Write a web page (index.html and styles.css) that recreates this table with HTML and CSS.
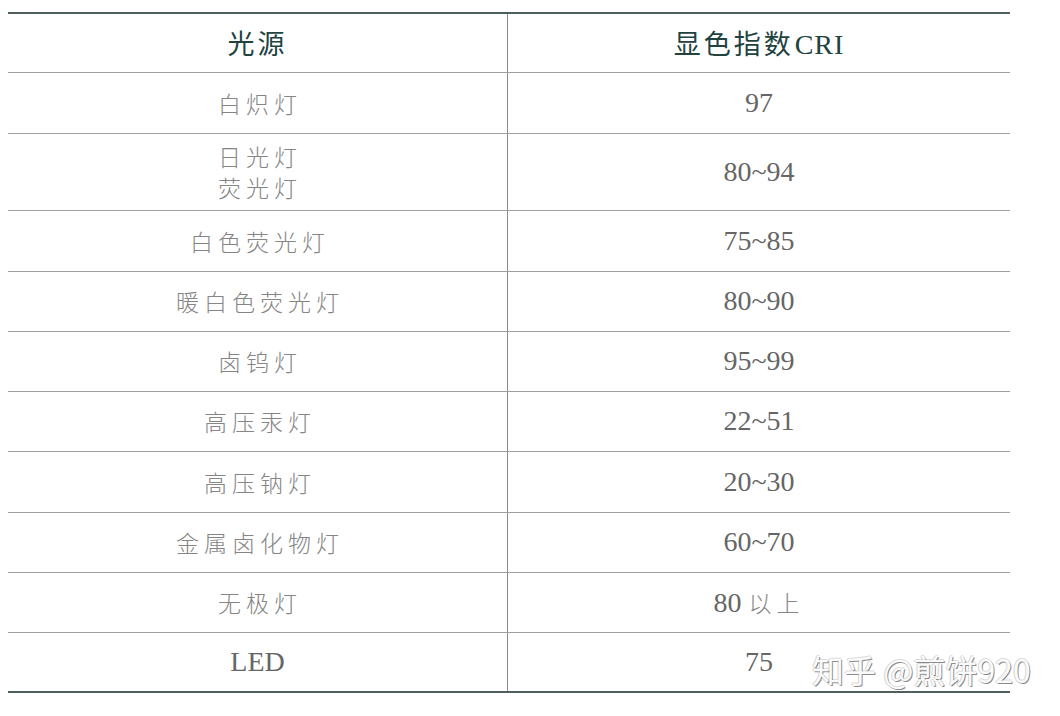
FILE: index.html
```html
<!DOCTYPE html>
<html lang="zh-CN">
<head>
<meta charset="utf-8">
<title>光源 显色指数</title>
<link rel="stylesheet" href="styles.css">
</head>
<body>
<div class="page">
  <table class="cri">
    <thead>
      <tr class="head"><th>光源</th><th>显色指数<span class="lat">CRI</span></th></tr>
    </thead>
    <tbody>
      <tr class="r61"><td class="zh"><span>白炽灯</span></td><td class="num">97</td></tr>
      <tr class="r77"><td class="zh"><span class="ln">日光灯</span><span class="ln">荧光灯</span></td><td class="num">80~94</td></tr>
      <tr class="r61"><td class="zh"><span>白色荧光灯</span></td><td class="num">75~85</td></tr>
      <tr class="r60"><td class="zh"><span>暖白色荧光灯</span></td><td class="num">80~90</td></tr>
      <tr class="r60"><td class="zh"><span>卤钨灯</span></td><td class="num">95~99</td></tr>
      <tr class="r60"><td class="zh"><span>高压汞灯</span></td><td class="num">22~51</td></tr>
      <tr class="r61"><td class="zh"><span>高压钠灯</span></td><td class="num">20~30</td></tr>
      <tr class="r60"><td class="zh"><span>金属卤化物灯</span></td><td class="num">60~70</td></tr>
      <tr class="r60"><td class="zh"><span>无极灯</span></td><td class="num">80 <span class="zhn">以上</span></td></tr>
      <tr class="r60"><td class="num">LED</td><td class="num">75</td></tr>
    </tbody>
  </table>
  <div class="mark">知乎 @煎饼920</div>
</div>
</body>
</html>
```
FILE: styles.css
```css
html, body {
  margin: 0;
  padding: 0;
  background: #ffffff;
}
.page {
  position: relative;
  width: 1060px;
  height: 716px;
  padding-top: 12px;
  box-sizing: border-box;
}
.cri {
  margin-left: 8px;
  width: 1002px;
  border-collapse: collapse;
  table-layout: fixed;
  border-top: 2px solid #4f5e5c;
  border-bottom: 2px solid #4f5e5c;
}
.cri th, .cri td {
  padding: 0;
  text-align: center;
  vertical-align: middle;
  border-bottom: 1px solid #a0a0a0;
}
.cri th:first-child, .cri td:first-child {
  width: 499px;
  border-right: 1px solid #8a8a8a;
}
.cri tbody tr:last-child td {
  border-bottom: none;
}
.head {
  height: 59px;
}
.head th {
  font-family: "Noto Sans CJK SC", "Noto Sans", sans-serif;
  font-weight: 400;
  font-size: 27px;
  color: #22423f;
  letter-spacing: 3px;
}
.head .lat {
  font-family: "Liberation Serif", serif;
  font-weight: 400;
  font-size: 28px;
  margin-left: 1px;
  letter-spacing: 1px;
}
.r61 { height: 61px; }
.r60 { height: 60px; }
.r77 { height: 77px; }
.zh {
  font-family: "Noto Sans CJK SC", sans-serif;
  font-weight: 300;
  font-size: 23px;
  line-height: 30px;
  color: #858585;
}
.zh span, .zhn {
  letter-spacing: 5px;
  padding-left: 5px;
}
.zh .ln {
  display: block;
  line-height: 31px;
  height: 31px;
}
.num {
  font-family: "Liberation Serif", "Noto Sans CJK SC", serif;
  font-size: 28px;
  color: #666666;
}
.zhn {
  font-family: "Noto Sans CJK SC", sans-serif;
  font-weight: 300;
  font-size: 23px;
  color: #858585;
  padding-left: 0;
}
.mark {
  position: absolute;
  left: 812px;
  top: 646px;
  font-family: "Noto Sans CJK SC", "Noto Sans", sans-serif;
  font-size: 32px;
  color: #fafafa;
  text-shadow: 1px 1px 0 #8c8c8c, -1px 0 0 #d4d4d4, 0 -1px 0 #dcdcdc;
  white-space: nowrap;
}
```
